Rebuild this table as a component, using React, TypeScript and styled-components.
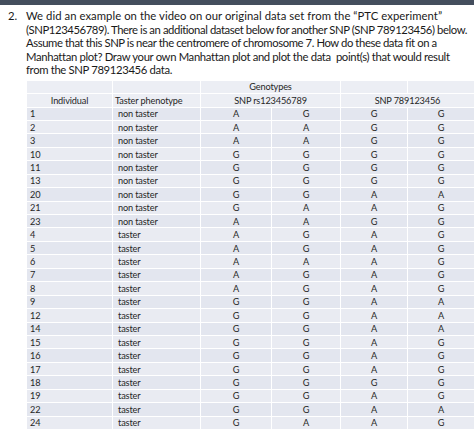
import React from "react";
import styled, { createGlobalStyle } from "styled-components";

const GlobalStyle = createGlobalStyle`
  html, body { margin: 0; padding: 0; background: #ffffff; }
  body { font-family: "Lato", "Open Sans", sans-serif; color: #1c1c1c; }
`;

const Page = styled.div`
  width: 474px;
  height: 430px;
  overflow: hidden;
  display: flex;
  flex-direction: column;
`;

const TopBar = styled.div`
  height: 5px;
  background: #444e5d;
  flex: none;
`;

const Question = styled.div`
  display: grid;
  grid-template-columns: 18px 1fr;
  padding: 4px 0 0 8px;
  font-size: 11.3px;
  line-height: 13.5px;
  color: #1a1a1a;
`;

const Num = styled.span``;

const QText = styled.div`
  display: flex;
  flex-direction: column;
`;

const QLine = styled.span<{ $ls: number }>`
  white-space: nowrap;
  letter-spacing: ${(p) => p.$ls}px;
`;

const Table = styled.div`
  margin: 4px 0 0 27px;
  display: grid;
  grid-template-columns: 85px 87px 70px 68px 66px 66px;
  grid-template-rows: 12px 13px;
  grid-auto-rows: 12.45px;
  gap: 1px;
  background: #ffffff;
  font-size: 9.2px;
  letter-spacing: -0.15px;
  color: #262626;
`;

const Cell = styled.div<{
  $align?: "left" | "center";
  $pad?: number;
  $span?: number;
  $tone: "head" | "band" | "plain";
}>`
  grid-column: span ${(p) => p.$span ?? 1};
  display: flex;
  align-items: center;
  justify-content: ${(p) => (p.$align === "left" ? "flex-start" : "center")};
  padding-left: ${(p) => p.$pad ?? 0}px;
  white-space: nowrap;
  overflow: hidden;
  background: ${(p) =>
    p.$tone === "head" ? "#eceef4" : p.$tone === "band" ? "#e3e6ef" : "#e9ebf2"};
`;

type R = [number, string, string, string, string, string];

const rows: R[] = [
  [1, "non taster", "A", "G", "G", "G"],
  [2, "non taster", "A", "A", "G", "G"],
  [3, "non taster", "A", "A", "G", "G"],
  [10, "non taster", "G", "G", "G", "G"],
  [11, "non taster", "G", "G", "G", "G"],
  [13, "non taster", "G", "G", "G", "G"],
  [20, "non taster", "G", "G", "A", "A"],
  [21, "non taster", "G", "A", "A", "G"],
  [23, "non taster", "A", "A", "G", "G"],
  [4, "taster", "A", "G", "A", "G"],
  [5, "taster", "A", "G", "A", "G"],
  [6, "taster", "A", "A", "A", "G"],
  [7, "taster", "A", "G", "A", "G"],
  [8, "taster", "A", "G", "A", "G"],
  [9, "taster", "G", "G", "A", "A"],
  [12, "taster", "G", "G", "A", "A"],
  [14, "taster", "G", "G", "A", "A"],
  [15, "taster", "G", "G", "A", "G"],
  [16, "taster", "G", "G", "A", "G"],
  [17, "taster", "G", "G", "A", "G"],
  [18, "taster", "G", "G", "G", "G"],
  [19, "taster", "G", "G", "A", "G"],
  [22, "taster", "G", "G", "A", "A"],
  [24, "taster", "G", "A", "A", "G"],
];

const lines: { text: string; ls: number }[] = [
  { text: "We did an example on the video on our original data set from the “PTC experiment”", ls: 0.05 },
  { text: "(SNP123456789). There is an additional dataset below for another SNP (SNP 789123456) below.", ls: -0.42 },
  { text: "Assume that this SNP is near the centromere of chromosome 7. How do these data fit on a", ls: -0.42 },
  { text: "Manhattan plot? Draw your own Manhattan plot and plot the data\u00a0 point(s) that would result", ls: -0.35 },
  { text: "from the SNP 789123456 data.", ls: -0.35 },
];

export default function App() {
  return (
    <Page>
      <GlobalStyle />
      <TopBar />
      <Question>
        <Num>2.</Num>
        <QText>
          {lines.map((l) => (
            <QLine key={l.text} $ls={l.ls}>
              {l.text}
            </QLine>
          ))}
        </QText>
      </Question>
      <Table>
        <Cell $tone="head" />
        <Cell $tone="head" />
        <Cell $tone="head" $span={2}>
          Genotypes
        </Cell>
        <Cell $tone="head" />
        <Cell $tone="head" />

        <Cell $tone="head">Individual</Cell>
        <Cell $tone="head" $align="left" $pad={2}>
          Taster phenotype
        </Cell>
        <Cell $tone="head" $span={2}>
          SNP rs123456789
        </Cell>
        <Cell $tone="head" $span={2}>
          SNP 789123456
        </Cell>

        {rows.map((r, i) => {
          const tone = i % 2 === 0 ? "band" : "plain";
          return (
            <React.Fragment key={r[0]}>
              <Cell $tone={tone} $align="left" $pad={3}>
                {r[0]}
              </Cell>
              <Cell $tone={tone} $align="left" $pad={5}>
                {r[1]}
              </Cell>
              <Cell $tone={tone}>{r[2]}</Cell>
              <Cell $tone={tone}>{r[3]}</Cell>
              <Cell $tone={tone}>{r[4]}</Cell>
              <Cell $tone={tone}>{r[5]}</Cell>
            </React.Fragment>
          );
        })}
      </Table>
    </Page>
  );
}
